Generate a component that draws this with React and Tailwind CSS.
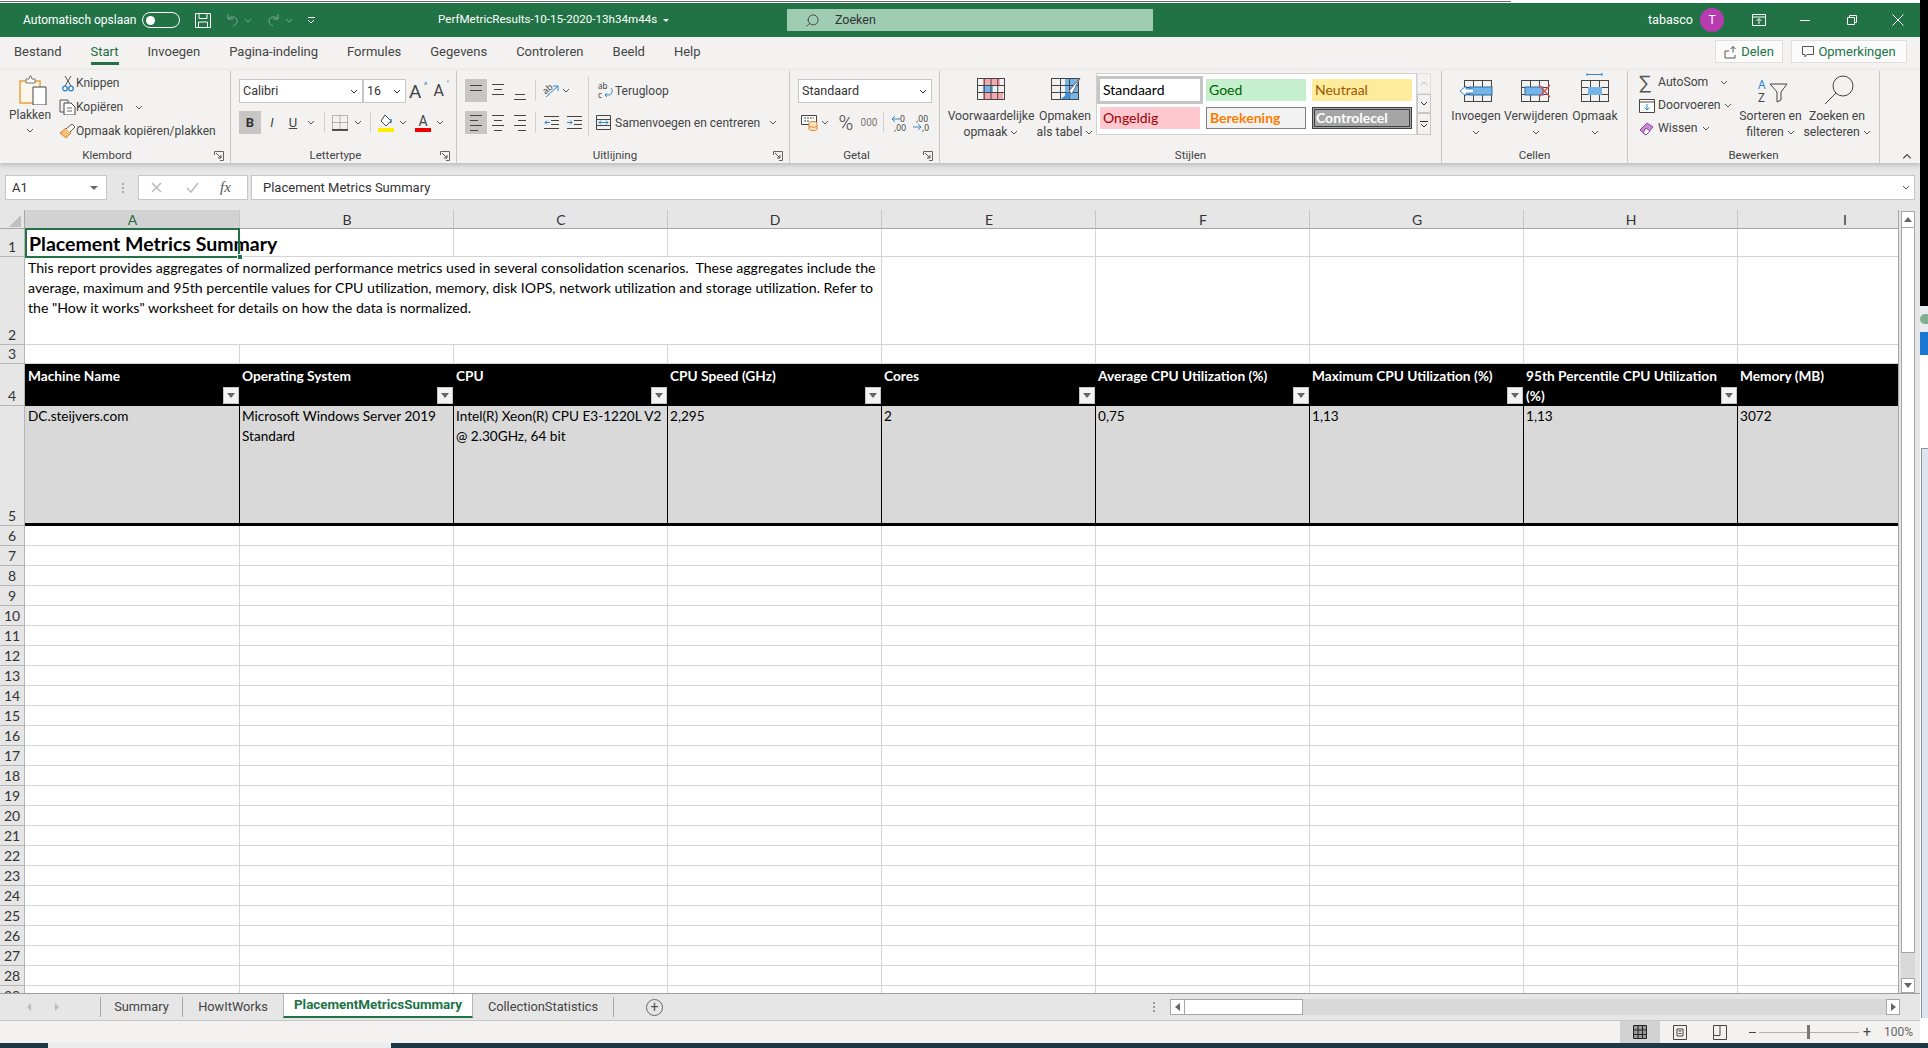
import { Search } from 'lucide-react'

const ui = "font-['Roboto',sans-serif]"
const cellFont = "font-['Lato',sans-serif]"

/* ── small icons ─────────────────────────────────────────────── */
function Chev({ className = 'text-[#555]' }) {
  return (
    <svg width="8" height="5" viewBox="0 0 8 5" className={className}>
      <path d="M1 1l3 3 3-3" fill="none" stroke="currentColor" strokeWidth="1" />
    </svg>
  )
}

function Launcher() {
  return (
    <svg width="10" height="10" viewBox="0 0 10 10" className="text-[#666]">
      <path d="M.5 4V.5H9.500V9.500H6" fill="none" stroke="currentColor" />
      <path d="M2 2l5 5M4 7h3V4" fill="none" stroke="#555" />
    </svg>
  )
}

function AlignIcon({ lines, y = 0 }) {
  return (
    <svg width="18" height="18" viewBox="0 0 18 18" className="text-[#444]">
      {lines.map((l, i) => (
        <path key={i} d={`M${l[0]} ${y + 2.5 + i * 5}H${l[1]}`} stroke="currentColor" />
      ))}
    </svg>
  )
}

function CellGrid({ w = 28, h = 22, cols = 3, rows = 3, x = 0, y = 0 }) {
  const v = []
  for (let i = 0; i <= cols; i++) v.push(x + 0.5 + (i * (w - 1)) / cols)
  const r = []
  for (let i = 0; i <= rows; i++) r.push(y + 0.5 + (i * (h - 1)) / rows)
  return (
    <g stroke="#444" fill="none">
      {v.map(p => <path key={`v${p}`} d={`M${p} ${y}V${y + h}`} />)}
      {r.map(p => <path key={`h${p}`} d={`M${x} ${p}H${x + w}`} />)}
    </g>
  )
}

function PasteIcon() {
  return (
    <svg width="28" height="30" viewBox="0 0 28 30">
      <path d="M1 6h20v22H1z" fill="#fdf6ea" stroke="#e8a33d" strokeWidth="1.500" />
      <path d="M7 6V4h3l1-3h1l1 3h3v4H7z" fill="#fff" stroke="#777" />
      <path d="M14 12h13v18H14z" fill="#fff" stroke="#444" />
    </svg>
  )
}

function ScissorsIcon() {
  return (
    <svg width="12" height="17" viewBox="0 0 12 17">
      <path d="M3 11L9 1M9 11L3 1" stroke="#555" fill="none" />
      <circle cx="3" cy="13.500" r="2.300" fill="none" stroke="#2e86c9" strokeWidth="1.300" />
      <circle cx="9" cy="13.500" r="2.300" fill="none" stroke="#2e86c9" strokeWidth="1.300" />
    </svg>
  )
}

function CopyIcon() {
  return (
    <svg width="17" height="16" viewBox="0 0 17 16">
      <path d="M5 13H1V1h8v3" fill="none" stroke="#555" />
      <path d="M5 4h7l4 4v8H5z" fill="#fff" stroke="#444" />
      <path d="M8 9h5M8 12h5" stroke="#666" />
    </svg>
  )
}

function PainterIcon() {
  return (
    <svg width="17" height="16" viewBox="0 0 17 16">
      <path d="M1 10l6-5 5 5-5 5z" fill="#f6c078" stroke="#d8842a" />
      <path d="M7 6l6-5 3 3-5 5" fill="#fff" stroke="#555" />
    </svg>
  )
}

function BordersIcon() {
  return (
    <svg width="16" height="16" viewBox="0 0 16 16">
      <path d="M.5 .5h15v14H.5z" fill="none" stroke="#777" strokeDasharray="1 1" />
      <path d="M8 .5v14M.5 7.500h15" stroke="#777" strokeDasharray="1 1" />
      <path d="M0 15h16" stroke="#222" strokeWidth="1.500" />
    </svg>
  )
}

function FillIcon() {
  return (
    <svg width="16" height="18" viewBox="0 0 16 18">
      <path d="M7 1l6 6-5 5-5-5z" fill="#fff" stroke="#444" />
      <path d="M13 5v4" stroke="#2e86c9" strokeWidth="1.500" />
      <rect y="14" width="16" height="4" fill="#ffee00" />
    </svg>
  )
}

function WrapIcon() {
  return (
    <svg width="15" height="18" viewBox="0 0 15 18" className="overflow-visible">
      <text x="0" y="7" fontSize="8" fill="#444" fontFamily="Noto Sans">ab</text>
      <text x="0" y="16" fontSize="8" fill="#444" fontFamily="Noto Sans">c</text>
      <path d="M13 6c3 4 0 7-3 7H7m2-2l-2 2 2 2" fill="none" stroke="#2e86c9" />
    </svg>
  )
}

function MergeIcon() {
  return (
    <svg width="15" height="15" viewBox="0 0 15 15">
      <path d="M.5 .5h14v14H.5zM.5 4.500h14M.5 10.500h14" fill="none" stroke="#444" />
      <path d="M3 7.500h9M5 5.500l-2 2 2 2M10 5.500l2 2-2 2" fill="none" stroke="#2e86c9" />
    </svg>
  )
}

function OrientIcon() {
  return (
    <svg width="17" height="15" viewBox="0 0 17 15" className="overflow-visible">
      <text x="0" y="9" fontSize="9" fill="#444" fontFamily="Noto Sans" transform="rotate(-40 5 7)">ab</text>
      <path d="M3 14L15 3m-5 0h5v5" fill="none" stroke="#2e86c9" />
    </svg>
  )
}

function IndentIcon({ flip }) {
  return (
    <svg width="15" height="13" viewBox="0 0 15 13">
      <path d="M0 .5h15M7 4.500h8M7 8.500h8M0 12.500h15" stroke="#444" />
      {flip ? (
        <path d="M0 6.500h5M3 4.500l2 2-2 2" fill="none" stroke="#2e86c9" />
      ) : (
        <path d="M6 6.500H1M3 4.500l-2 2 2 2" fill="none" stroke="#2e86c9" />
      )}
    </svg>
  )
}

function CurrencyIcon() {
  return (
    <svg width="17" height="17" viewBox="0 0 17 17">
      <path d="M.5 1.500h15v9H.5z" fill="#fff" stroke="#444" />
      <path d="M3 4h10M3 7h5" stroke="#444" strokeDasharray="2 1" />
      <ellipse cx="12" cy="9" rx="4" ry="1.500" fill="#fbe3c3" stroke="#d8842a" />
      <path d="M8 9v6c0 2 8 2 8 0V9" fill="#fbe3c3" stroke="#d8842a" />
      <path d="M8 12c0 1.500 8 1.500 8 0" fill="none" stroke="#d8842a" />
    </svg>
  )
}

function DecimalIcon({ more }) {
  return (
    <svg width="17" height="18" viewBox="0 0 17 18" className="overflow-visible">
      {more ? (
        <>
          <text x="3" y="8" fontSize="8.500" fill="#444" fontFamily="Noto Sans">,00</text>
          <text x="9" y="17" fontSize="8.500" fill="#444" fontFamily="Noto Sans">,0</text>
          <path d="M0 13h8M5 10l3 3-3 3" fill="none" stroke="#2e86c9" />
        </>
      ) : (
        <>
          <text x="9" y="8" fontSize="8.500" fill="#444" fontFamily="Noto Sans">0</text>
          <text x="3" y="17" fontSize="8.500" fill="#444" fontFamily="Noto Sans">,00</text>
          <path d="M9 5H1M4 2L1 5l3 3" fill="none" stroke="#2e86c9" />
        </>
      )}
    </svg>
  )
}

function CondIcon() {
  return (
    <svg width="29" height="30" viewBox="0 0 29 30">
      <rect x="6" y="8" width="17" height="7" fill="#f4a7ac" />
      <rect x="6" y="15" width="10" height="7" fill="#74b4e8" />
      <rect x="6" y="22" width="20" height="8" fill="#f4a7ac" />
      <CellGrid w={28} h={22} x={0} y={8} cols={4} rows={3} />
    </svg>
  )
}

function TableIcon() {
  return (
    <svg width="30" height="30" viewBox="0 0 30 30">
      <rect x="14" y="8" width="14" height="22" fill="#74b4e8" />
      <CellGrid w={28} h={22} x={0} y={8} cols={3} rows={3} />
      <path d="M29 8L18 21l3 3z" fill="#fff" stroke="#666" />
      <path d="M17 22c-3 1-2 5-7 6 5 3 10 0 10-4z" fill="#3f8fd2" />
    </svg>
  )
}

function InsertIcon() {
  return (
    <svg width="34" height="30" viewBox="0 0 34 30">
      <CellGrid w={28} h={22} x={5} y={8} cols={3} rows={3} />
      <rect x="10" y="15" width="23" height="8" fill="#74b4e8" stroke="#2a6aa8" />
      <path d="M14 17H7V14L1 19l6 5v-3h7" fill="#fff" stroke="#2e86c9" />
    </svg>
  )
}

function DeleteIcon() {
  return (
    <svg width="30" height="30" viewBox="0 0 30 30">
      <CellGrid w={28} h={22} x={0} y={8} cols={3} rows={3} />
      <rect x="4" y="15" width="18" height="8" fill="#74b4e8" stroke="#2a6aa8" />
      <path d="M18 13l11 12M29 13L18 25" stroke="#e5484d" strokeWidth="1.300" />
    </svg>
  )
}

function FormatIcon() {
  return (
    <svg width="30" height="30" viewBox="0 0 30 30">
      <path d="M7 2.500h15M7 1v3M22 1v3" stroke="#2e86c9" />
      <CellGrid w={28} h={22} x={1} y={8} cols={3} rows={3} />
      <rect x="8" y="15" width="14" height="8" fill="#74b4e8" />
    </svg>
  )
}

function SortIcon() {
  return (
    <svg width="32" height="27" viewBox="0 0 32 27">
      <text x="1" y="12" fontSize="12" fill="#2e86c9" fontFamily="Noto Sans">A</text>
      <text x="1" y="25" fontSize="12" fill="#444" fontFamily="Noto Sans">Z</text>
      <path d="M13 7h17l-6 8v8l-4 2V15z" fill="none" stroke="#444" />
    </svg>
  )
}

function FindIcon() {
  return (
    <svg width="32" height="30" viewBox="0 0 32 30">
      <circle cx="20" cy="11" r="10" fill="none" stroke="#444" />
      <path d="M13 18L2 29" stroke="#444" />
    </svg>
  )
}

function ViewIcon({ kind }) {
  if (kind === 'grid') {
    return (
      <svg width="14" height="14" viewBox="0 0 14 14">
        <path d="M.5 .5h13v13H.5zM.5 5h13M.5 9.500h13M5 .5v13M9.500 .5v13" fill="#999" stroke="#222" />
      </svg>
    )
  }
  if (kind === 'page') {
    return (
      <svg width="14" height="15" viewBox="0 0 14 15">
        <path d="M.5 .5h13v14H.5z" fill="none" stroke="#444" />
        <path d="M4 4h6v7H4zM5.500 6h3M5.500 8.500h3" fill="none" stroke="#444" />
      </svg>
    )
  }
  return (
    <svg width="14" height="15" viewBox="0 0 14 15">
      <path d="M.5 .5h13v14H.5zM.5 10.500H7V.5" fill="none" stroke="#444" />
    </svg>
  )
}

function FilterButton() {
  return (
    <div className="absolute right-[1px] bottom-[2px] w-[16px] h-[17px] bg-[#f3f3f3] border border-[#c4c4c4] flex items-center justify-center">
      <div className="w-0 h-0 border-x-[4px] border-x-transparent border-t-[5px] border-t-[#666]" />
    </div>
  )
}

/* ── ribbon parts ────────────────────────────────────────────── */
function Group({ width, label, launcher, children }) {
  return (
    <div className={`${width} flex flex-col flex-shrink-0 mt-px border-r border-[#c8c6c4]`}>
      <div className="h-[78px] flex">{children}</div>
      <div className="h-[10px] flex text-[11.500px] leading-[12px] text-[#444]">
        <div className="flex-1 text-center">{label}</div>
        {launcher && <div className="w-[16px] flex items-start pt-[2px]"><Launcher /></div>}
      </div>
    </div>
  )
}

function BigButton({ width, margin = '', icon, lines, chevOwnLine }) {
  return (
    <div className={`${width} ${margin} flex flex-col items-center flex-shrink-0 text-[12.200px] leading-[20px] text-[#444]`}>
      <div className="h-[35px] pt-px flex items-start justify-center">{icon}</div>
      <span className="whitespace-nowrap h-[16px] leading-[20px]">{lines[0]}</span>
      {chevOwnLine ? (
        <div className="h-[20px] flex items-center"><Chev /></div>
      ) : (
        <div className="h-[20px] flex items-center gap-[3px] whitespace-nowrap">{lines[1]} <Chev /></div>
      )}
    </div>
  )
}

function ComboBox({ width, text, font = '' }) {
  return (
    <div className={`${width} h-[24px] bg-white border border-[#c6c6c6] flex items-center justify-between pl-[3px] pr-[4px] text-[12.500px] text-[#333] ${font}`}>
      <span>{text}</span>
      <Chev className="text-[#333]" />
    </div>
  )
}

const VSep = () => <div className="w-px h-[21px] bg-[#d2d0ce] flex-shrink-0" />

const styleCells = [
  { text: 'Standaard', cls: 'pl-[3px] bg-white text-black outline outline-[3px] outline-[#c6c6c6]' },
  { text: 'Goed', cls: 'pl-[3px] bg-[#c6efce] text-[#006100]' },
  { text: 'Neutraal', cls: 'pl-[3px] bg-[#ffeb9c] text-[#9c5700]' },
  { text: 'Ongeldig', cls: 'pl-[3px] bg-[#ffc7ce] text-[#9c0006]' },
  { text: 'Berekening', cls: 'pl-[3px] bg-[#f2f2f2] text-[#fa7d00] border border-[#7f7f7f] font-bold' },
  { text: 'Controlecel', cls: 'pl-[1px] bg-[#a5a5a5] text-white border-[3px] border-double border-[#3f3f3f] font-bold' },
]

function Ribbon() {
  return (
    <div className="h-[93px] flex bg-[#f3f2f1] shadow-[0_2px_5px_rgba(0,0,0,0.2)] relative z-10">
      {/* Klembord */}
      <Group width="w-[231px]" label="Klembord" launcher>
        <div className="w-[60px] flex-shrink-0 flex flex-col items-center text-[12px] text-[#444]">
          <div className="h-[34px] pt-[4px] pl-[5px]"><PasteIcon /></div>
          <div className="h-[20px] leading-[20px]">Plakken</div>
          <div className="h-[10px] flex items-center"><Chev /></div>
        </div>
        <div className="flex flex-col text-[12px] text-[#444]">
          <div className="h-[24px] flex items-center"><div className="w-[16px] pl-[2px]"><ScissorsIcon /></div>Knippen</div>
          <div className="h-[24px] flex items-center"><div className="w-[16px] -ml-[1px] mr-[1px]"><CopyIcon /></div>Kopiëren<span className="ml-[12px]"><Chev /></span></div>
          <div className="h-[24px] flex items-center"><div className="w-[16px] -ml-[1px] mr-[1px]"><PainterIcon /></div><span className="whitespace-nowrap">Opmaak kopiëren/plakken</span></div>
        </div>
      </Group>

      {/* Lettertype */}
      <Group width="w-[226px]" label="Lettertype" launcher>
        <div className="pl-[8px] pt-[8px]">
          <div className="flex items-center">
            <ComboBox width="w-[124px]" text="Calibri" />
            <ComboBox width="w-[43px]" text="16" />
            <span className="ml-[3px] text-[19px] leading-none text-[#444] relative">A<span className="absolute -top-[1px] -right-[6px] text-[9px] text-[#2e86c9]">^</span></span>
            <span className="ml-[12px] text-[16px] leading-none text-[#444] relative">A<span className="absolute -top-[2px] -right-[6px] text-[9px] text-[#2e86c9]">ˇ</span></span>
          </div>
          <div className="flex items-center mt-[8px] h-[23px]">
            <div className="w-[22px] h-[23px] bg-[#c8c6c4] flex items-center justify-center text-[13px] font-bold text-[#333]">B</div>
            <div className="w-[22px] text-center text-[13px] italic text-[#444]">I</div>
            <div className="w-[20px] text-center text-[13px] underline text-[#444]">U</div>
            <div className="w-[16px] flex justify-center"><Chev /></div>
            <div className="w-[5px]" /><VSep /><div className="w-[7px]" />
            <BordersIcon />
            <div className="w-[18px] flex justify-end pr-[4px]"><Chev /></div>
            <div className="w-[4px]" /><VSep /><div className="w-[7px]" />
            <FillIcon />
            <div className="w-[17px] flex justify-center"><Chev /></div>
            <div className="w-[4px]" />
            <div className="w-[16px] flex flex-col items-center text-[14px] leading-[14px] text-[#444]">A<div className="w-[16px] h-[4px] bg-[#ee0000]" /></div>
            <div className="w-[18px] flex justify-center"><Chev /></div>
          </div>
        </div>
      </Group>

      {/* Uitlijning */}
      <Group width="w-[333px]" label="Uitlijning" launcher>
        <div className="w-[131px] flex-shrink-0 pl-[8px] pt-[8px]">
          <div className="flex items-center h-[23px]">
            <div className="w-[22px] h-[23px] bg-[#c8c6c4] flex items-center justify-center"><AlignIcon lines={[[3, 15], [3, 15]]} y={1} /></div>
            <div className="w-[22px] flex justify-center"><AlignIcon lines={[[3, 15], [5, 13], [3, 15]]} /></div>
            <div className="w-[22px] flex justify-center"><AlignIcon lines={[[0, 0], [4, 14], [3, 15]]} y={5} /></div>
            <div className="w-[4px]" /><VSep /><div className="w-[7px]" />
            <OrientIcon />
            <div className="w-[12px] flex justify-center"><Chev /></div>
          </div>
          <div className="flex items-center h-[23px] mt-[9px]">
            <div className="w-[22px] h-[23px] bg-[#c8c6c4] flex items-center justify-center"><AlignIcon lines={[[3, 15], [3, 11], [3, 15], [3, 11]]} y={-1} /></div>
            <div className="w-[22px] flex justify-center"><AlignIcon lines={[[3, 15], [5, 13], [3, 15], [5, 13]]} y={-1} /></div>
            <div className="w-[22px] flex justify-center"><AlignIcon lines={[[3, 15], [7, 15], [3, 15], [7, 15]]} y={-1} /></div>
            <div className="w-[4px]" /><VSep /><div className="w-[8px]" />
            <IndentIcon />
            <div className="w-[8px]" />
            <IndentIcon flip />
          </div>
        </div>
        <div className="w-px h-[59px] mt-[6px] bg-[#d2d0ce]" />
        <div className="pt-[8px] text-[12px] text-[#444]">
          <div className="flex items-center h-[23px] pl-[9px]">
            <WrapIcon /><span className="ml-[2px]">Terugloop</span>
          </div>
          <div className="flex items-center h-[23px] mt-[9px] pl-[7px] whitespace-nowrap">
            <MergeIcon /><span className="ml-[4px]">Samenvoegen en centreren</span><span className="ml-[9px]"><Chev /></span>
          </div>
        </div>
      </Group>

      {/* Getal */}
      <Group width="w-[150px]" label="Getal" launcher>
        <div className="pl-[8px] pt-[8px]">
          <ComboBox width="w-[134px]" text="Standaard" />
          <div className="flex items-center h-[23px] mt-[8px] pl-[3px]">
            <CurrencyIcon />
            <div className="w-[14px] flex justify-center"><Chev /></div>
            <div className="w-[6px]" />
            <span className="w-[16px] text-[20px] leading-none text-[#444] text-center font-light">%</span>
            <div className="w-[6px]" />
            <span className="w-[18px] text-[10px] text-[#777] text-center">000</span>
            <div className="w-[5px]" /><VSep /><div className="w-[7px]" />
            <DecimalIcon />
            <div className="w-[5px]" />
            <DecimalIcon more />
          </div>
        </div>
      </Group>

      {/* Stijlen */}
      <Group width="w-[502px]" label="Stijlen">
        <BigButton width="w-[82px]" margin="ml-[10px]" icon={<div className="pl-[1px] -mt-[2px]"><CondIcon /></div>} lines={['Voorwaardelijke', 'opmaak']} />
        <BigButton width="w-[60px]" margin="ml-[3px]" icon={<div className="pl-[1px] -mt-[2px]"><TableIcon /></div>} lines={['Opmaken', 'als tabel']} />
        <div className={`${cellFont} mt-[2px] w-[321px] h-[62px] ml-px bg-white border border-[#d2d0ce] grid grid-cols-[100px_100px_100px] content-start gap-x-[6px] gap-y-[6px] pl-[3px] pt-[5px] text-[14px]`}>
          {styleCells.map(c => (
            <div key={c.text} className={`h-[22px] flex items-center leading-none ${c.cls}`}>{c.text}</div>
          ))}
        </div>
        <div className="mt-[2px] w-[14px] h-[62px] flex flex-col">
          <div className="h-[21px] bg-[#f3f2f1] border border-[#e1dfdd] flex items-center justify-center text-[#bbb]"><Chev className="rotate-180 text-[#bbb]" /></div>
          <div className="h-[19px] bg-[#f3f2f1] border border-[#c8c6c4] flex items-center justify-center"><Chev className="text-[#333]" /></div>
          <div className="h-[22px] bg-[#f3f2f1] border border-[#c8c6c4] flex flex-col items-center justify-center gap-[1px]"><div className="w-[8px] h-px bg-[#333]" /><Chev className="text-[#333]" /></div>
        </div>
      </Group>

      {/* Cellen */}
      <Group width="w-[186px]" label="Cellen">
        <BigButton width="w-[52px]" margin="ml-[8px]" icon={<InsertIcon />} lines={['Invoegen']} chevOwnLine />
        <BigButton width="w-[62px]" margin="ml-[3px]" icon={<DeleteIcon />} lines={['Verwijderen']} chevOwnLine />
        <BigButton width="w-[50px]" margin="ml-[3px]" icon={<FormatIcon />} lines={['Opmaak']} chevOwnLine />
      </Group>

      {/* Bewerken */}
      <Group width="w-[252px]" label="Bewerken">
        <div className="w-[110px] flex-shrink-0 pl-[11px] text-[12.200px] text-[#444]">
          <div className="h-[23px] flex items-center">
            <span className="w-[19px] text-[20px] leading-none text-[#555]">∑</span>AutoSom<span className="ml-[12px]"><Chev /></span>
          </div>
          <div className="h-[23px] flex items-center whitespace-nowrap">
            <svg width="16" height="14" viewBox="0 0 16 14" className="mr-[3px]">
              <path d="M.5 .5h15v13H.5zM.5 3h15" fill="#fff" stroke="#444" />
              <path d="M8 5v6M5.500 8.500L8 11l2.500-2.500" fill="none" stroke="#2e86c9" />
            </svg>
            Doorvoeren<span className="ml-[3px]"><Chev /></span>
          </div>
          <div className="h-[23px] flex items-center">
            <svg width="16" height="14" viewBox="0 0 16 14" className="mr-[3px]">
              <path d="M1 8l7-7 6 4-7 8z" fill="#c98bd3" stroke="#8e44a6" />
              <path d="M4 11l3 2 4-4-4-3z" fill="#fff" stroke="#8e44a6" />
            </svg>
            Wissen<span className="ml-[4px]"><Chev /></span>
          </div>
        </div>
        <BigButton width="w-[65px]" icon={<div className="pl-[4px] mt-[5px]"><SortIcon /></div>} lines={['Sorteren en', 'filteren']} />
        <BigButton width="w-[68px]" icon={<div className="pl-[3px] mt-[3px]"><FindIcon /></div>} lines={['Zoeken en', 'selecteren']} />
      </Group>

      <div className="flex-1 flex items-end justify-end pb-[4px] pr-[9px]">
        <Chev className="rotate-180 text-[#444] scale-125" />
      </div>
    </div>
  )
}

/* ── sheet ───────────────────────────────────────────────────── */
const colWidths = ['w-[215px]', 'w-[214px]', 'w-[214px]', 'w-[214px]', 'w-[214px]', 'w-[214px]', 'w-[214px]', 'w-[214px]', 'w-[214px]']
const colNames = ['A', 'B', 'C', 'D', 'E', 'F', 'G', 'H', 'I']

const headerCells = [
  'Machine Name', 'Operating System', 'CPU', 'CPU Speed (GHz)', 'Cores',
  'Average CPU Utilization (%)', 'Maximum CPU Utilization (%)', '95th Percentile CPU Utilization (%)', 'Memory (MB)',
]
const dataCells = [
  'DC.steijvers.com', 'Microsoft Windows Server 2019 Standard', 'Intel(R) Xeon(R) CPU E3-1220L V2 @ 2.30GHz, 64 bit',
  '2,295', '2', '0,75', '1,13', '1,13', '3072',
]

function RowHead({ n, height }) {
  return (
    <div className={`${height} w-[25px] flex-shrink-0 bg-[#e6e6e6] border-r border-b border-[#b5b5b5] flex items-end justify-center text-[14px] leading-[19px] text-[#333]`}>
      {n}
    </div>
  )
}

function PlainRow({ n, height = 'h-[20px]' }) {
  return (
    <div className="flex">
      <RowHead n={n} height={height} />
      {colWidths.map((w, i) => (
        <div key={i} className={`${w} ${height} flex-shrink-0 border-r border-b border-[#d4d4d4]`} />
      ))}
    </div>
  )
}

function Sheet() {
  const plain = []
  for (let n = 7; n <= 28; n++) plain.push(n)

  return (
    <div className={`${cellFont} flex-1 flex flex-col min-w-0 overflow-hidden border-r border-[#a6a6a6]`}>
      {/* column headers */}
      <div className="flex h-[19px] flex-shrink-0">
        <div className="w-[25px] flex-shrink-0 bg-[#e6e6e6] border-b border-r border-[#a6a6a6] flex items-end justify-end pr-[3px] pb-px">
          <div className="w-0 h-0 border-l-[12px] border-l-transparent border-b-[12px] border-b-[#bfbfbf]" />
        </div>
        {colNames.map((c, i) => (
          <div key={c} className={`${colWidths[i]} flex-shrink-0 border-r border-b border-b-[#a6a6a6] border-r-[#c6c6c6] flex items-center justify-center pl-[1px] text-[14px] ${i === 0 ? 'bg-[#d2d2d2] text-[#1f6b43]' : 'bg-[#e6e6e6] text-[#333]'}`}>
            {c}
          </div>
        ))}
      </div>

      {/* row 1 */}
      <div className="flex relative">
        <RowHead n={1} height="h-[28px]" />
        {colWidths.map((w, i) => (
          <div key={i} className={`${w} h-[28px] flex-shrink-0 border-r border-b border-[#d4d4d4]`}>
            {i === 0 && <div className="pl-[4px] pt-[1px] text-[19.500px] leading-[28px] font-bold whitespace-nowrap text-black relative z-10">Placement Metrics Summary</div>}
          </div>
        ))}
        <div className="absolute left-[25px] -top-px w-[215px] h-[30px] border-2 border-[#217346] z-20" />
        <div className="absolute left-[237px] top-[25px] w-[6px] h-[6px] bg-[#217346] border border-white z-20" />
      </div>

      {/* row 2 */}
      <div className="flex">
        <RowHead n={2} height="h-[88px]" />
        <div className="w-[857px] h-[88px] flex-shrink-0 border-r border-b border-[#d4d4d4] pl-[3px] pt-px text-[14.150px] leading-[20px] text-black whitespace-pre-wrap">
          {'This report provides aggregates of normalized performance metrics used in several consolidation scenarios.  These aggregates include the average, maximum and 95th percentile values for CPU utilization, memory, disk IOPS, network utilization and storage utilization. Refer to the "How it works" worksheet for details on how the data is normalized.'}
        </div>
        {colWidths.slice(4).map((w, i) => (
          <div key={i} className={`${w} h-[88px] flex-shrink-0 border-r border-b border-[#d4d4d4]`} />
        ))}
      </div>

      <PlainRow n={3} height="h-[19px]" />

      {/* row 4 */}
      <div className="flex">
        <RowHead n={4} height="h-[42px]" />
        {headerCells.map((t, i) => (
          <div key={t} className={`${colWidths[i]} h-[42px] flex-shrink-0 bg-black text-white font-bold text-[13.700px] leading-[20px] ${i === 0 ? 'pl-[3px]' : 'pl-[2px]'} pr-[8px] pt-[2px] relative`}>
            {t}
            <FilterButton />
          </div>
        ))}
      </div>

      {/* row 5 */}
      <div className="flex">
        <RowHead n={5} height="h-[120px]" />
        {dataCells.map((t, i) => (
          <div key={i} className={`${colWidths[i]} h-[120px] flex-shrink-0 bg-[#d9d9d9] border-r border-b-[3px] border-r-black border-b-black text-[13.600px] leading-[20px] text-black ${i === 0 ? 'pl-[3px]' : 'pl-[2px]'}`}>
            {t}
          </div>
        ))}
      </div>

      <PlainRow n={6} />
      {plain.map(n => <PlainRow key={n} n={n} />)}
      <PlainRow n={29} />
    </div>
  )
}

function VScrollBar() {
  return (
    <div className="w-[21px] flex-shrink-0 bg-[#e6e6e6] pl-[2px] pr-[5px] pt-px flex flex-col">
      <div className="h-[17px] bg-white border border-[#a6a6a6] flex items-center justify-center">
        <div className="w-0 h-0 border-x-[4px] border-x-transparent border-b-[5px] border-b-[#666]" />
      </div>
      <div className="h-[725px] bg-white border-x border-b border-[#a6a6a6]" />
      <div className="flex-1 bg-[#d9d9d9]" />
      <div className="h-[15px] bg-white border border-[#a6a6a6] flex items-center justify-center">
        <div className="w-0 h-0 border-x-[4px] border-x-transparent border-t-[5px] border-t-[#666]" />
      </div>
    </div>
  )
}

/* ── tabs ────────────────────────────────────────────────────── */
function TabBar() {
  return (
    <div className="h-[28px] flex-shrink-0 flex bg-[#e6e6e6] border-t border-[#9e9e9e] border-b border-b-[#c6c6c6] text-[12.800px] text-[#444] items-center">
      <div className="w-[100px] flex items-center pl-[27px] gap-[24px] flex-shrink-0 h-full">
        <div className="w-0 h-0 border-y-[4px] border-y-transparent border-r-[4px] border-r-[#bbb]" />
        <div className="w-0 h-0 border-y-[4px] border-y-transparent border-l-[4px] border-l-[#bbb]" />
      </div>
      <div className="w-px h-[20px] bg-[#a6a6a6]" />
      <div className="w-[81px] text-center">Summary</div>
      <div className="w-px h-[20px] bg-[#a6a6a6]" />
      <div className="w-[100px] text-center">HowItWorks</div>
      <div className="w-[190px] h-[24px] self-start bg-white border-x border-b-2 border-x-[#b5b5b5] border-b-[#217346] flex items-center justify-center text-[13.400px] font-bold text-[#217346]">PlacementMetricsSummary</div>
      <div className="w-[140px] text-center whitespace-nowrap">CollectionStatistics</div>
      <div className="w-px h-[20px] bg-[#a6a6a6]" />
      <div className="w-[32px]" />
      <div className="w-[17px] h-[17px] rounded-full border border-[#666] flex items-center justify-center text-[14px] leading-none text-[#555]">+</div>
      <div className="w-[490px]" />
      <div className="flex flex-col gap-[2px] w-[17px]">
        <div className="w-[2px] h-[2px] bg-[#999]" /><div className="w-[2px] h-[2px] bg-[#999]" /><div className="w-[2px] h-[2px] bg-[#999]" />
      </div>
      {/* horizontal scrollbar */}
      <div className="w-[730px] h-[16px] flex">
        <div className="w-[15px] bg-white border border-[#a6a6a6] flex items-center justify-center">
          <div className="w-0 h-0 border-y-[4px] border-y-transparent border-r-[5px] border-r-[#666]" />
        </div>
        <div className="w-[118px] bg-white border-y border-r border-[#a6a6a6]" />
        <div className="flex-1 bg-[#d9d9d9]" />
        <div className="w-[14px] bg-white border border-[#a6a6a6] flex items-center justify-center">
          <div className="w-0 h-0 border-y-[4px] border-y-transparent border-l-[5px] border-l-[#666]" />
        </div>
      </div>
    </div>
  )
}

function StatusBar() {
  return (
    <div className="h-[22px] flex-shrink-0 bg-[#f3f2f1] flex items-stretch justify-end text-[12px] text-[#666] pr-[7px]">
      <div className="w-[40px] bg-[#d2d2d2] flex items-center justify-center"><ViewIcon kind="grid" /></div>
      <div className="w-[40px] flex items-center justify-center"><ViewIcon kind="page" /></div>
      <div className="w-[40px] flex items-center justify-center"><ViewIcon kind="break" /></div>
      <div className="w-[18px] flex items-center justify-end pr-[2px]"><div className="w-[7px] h-px bg-[#444]" /></div>
      <div className="w-[100px] ml-[1px] flex items-center">
        <div className="w-[48px] h-px bg-[#b0b0b0]" />
        <div className="w-[3px] h-[14px] bg-[#777]" />
        <div className="flex-1 h-px bg-[#b0b0b0]" />
      </div>
      <div className="w-[16px] flex items-center justify-center text-[#444] text-[14px]">+</div>
      <div className="w-[38px] flex items-center justify-end leading-none">100%</div>
    </div>
  )
}

/* ── main ────────────────────────────────────────────────────── */
export default function App() {
  const tabs = ['Bestand', 'Start', 'Invoegen', 'Pagina-indeling', 'Formules', 'Gegevens', 'Controleren', 'Beeld', 'Help']

  return (
    <div className={`${ui} w-[1928px] h-[1048px] overflow-hidden flex flex-col bg-white`}>
      <div className="flex flex-1 min-h-0">
        {/* Excel window */}
        <div className="w-[1920px] flex-shrink-0 flex flex-col">
          <div className="h-[3px] bg-white pt-px flex-shrink-0"><div className="w-[1511px] h-px bg-[#6b6b6b]" /></div>

          {/* title bar */}
          <div className="h-[34px] flex-shrink-0 bg-[#217346] text-white flex items-center text-[12.500px] relative">
            <span className="ml-[23px] w-[112px] whitespace-nowrap text-[12px]">Automatisch opslaan</span>
            <div className="ml-[7px] w-[38px] h-[16px] rounded-full border border-white flex items-center pl-[3px]">
              <div className="w-[9px] h-[9px] rounded-full bg-white" />
            </div>
            <svg width="16" height="15" viewBox="0 0 16 15" className="ml-[15px]">
              <path d="M.5 .5h15v14H.5zM4 .5v5h8v-5M3.500 14.500V9h9v5.500" fill="none" stroke="#fff" />
            </svg>
            <svg width="15" height="14" viewBox="0 0 15 14" className="ml-[14px] opacity-40">
              <path d="M3 1v5h5M3 6c3-4 10-2 9 3-.5 2-2 3-4 4" fill="none" stroke="#fff" />
            </svg>
            <span className="ml-[4px] opacity-40"><Chev className="text-white" /></span>
            <svg width="15" height="14" viewBox="0 0 15 14" className="ml-[14px] opacity-40">
              <path d="M12 1v5H7M12 6C9 2 2 4 3 9c.5 2 2 3 4 4" fill="none" stroke="#fff" />
            </svg>
            <span className="ml-[4px] opacity-40"><Chev className="text-white" /></span>
            <span className="ml-[14px] flex flex-col items-center gap-[1px]"><div className="w-[7px] h-px bg-white" /><Chev className="text-white" /></span>

            <span className="ml-[123px] w-[219px] whitespace-nowrap text-[11.600px]">PerfMetricResults-10-15-2020-13h34m44s</span>
            <div className="ml-[6px] w-0 h-0 border-x-[3px] border-x-transparent border-t-[3px] border-t-white" />

            <div className="ml-[118px] w-[366px] h-[22px] bg-[#9fcdb3] flex items-center text-[#333] pl-[18px]">
              <Search size={15} strokeWidth={1.3} className="-scale-x-100 text-[#333]" />
              <span className="ml-[15px]">Zoeken</span>
            </div>

            <span className="ml-[495px] w-[41px]">tabasco</span>
            <div className="ml-[11px] w-[24px] h-[24px] rounded-full bg-[#b83bb0] flex items-center justify-center text-[12px]">T</div>
            <svg width="14" height="12" viewBox="0 0 14 12" className="ml-[28px]">
              <path d="M.5 .5h13v11H.5zM.5 3h13M7 10V5M4.500 7L7 4.500 9.500 7" fill="none" stroke="#fff" />
            </svg>
            <div className="ml-[34px] w-[10px] h-px bg-white" />
            <svg width="10" height="10" viewBox="0 0 10 10" className="ml-[37px]">
              <path d="M.5 2.500h7v7h-7zM2.500 2.500v-2h7v7h-2" fill="none" stroke="#fff" />
            </svg>
            <svg width="12" height="12" viewBox="0 0 12 12" className="ml-[35px]">
              <path d="M.5 .5l11 11M11.500 .5l-11 11" stroke="#fff" />
            </svg>
          </div>

          {/* ribbon tabs */}
          <div className="h-[33px] flex-shrink-0 bg-[#f3f2f1] flex items-start pl-[14px] text-[13px] text-[#444]">
            {tabs.map(t => (
              <div key={t} className={`relative mr-[29px] h-[30px] leading-[30px] whitespace-nowrap ${t === 'Start' ? 'text-[#1f6b43]' : ''}`}>
                {t}
                {t === 'Start' && <div className="absolute left-0 right-0 top-[25px] h-[3px] bg-[#217346]" />}
              </div>
            ))}
            <div className="flex-1" />
            <div className="w-[68px] h-[23px] mt-[3px] pt-px bg-[#fbfbfb] border border-[#e1dfdd] flex items-center justify-center gap-[4px] text-[#217346]">
              <svg width="13" height="13" viewBox="0 0 13 13">
                <path d="M9 .5v6M6.500 3l2.500-2.500L11.500 3M5 5H1v7h10V9" fill="none" stroke="#555" />
              </svg>
              Delen
            </div>
            <div className="ml-[8px] mr-[13px] mt-[3px] pt-px w-[116px] h-[23px] bg-[#fbfbfb] border border-[#e1dfdd] flex items-center justify-center gap-[4px] text-[#217346]">
              <svg width="12" height="12" viewBox="0 0 12 12">
                <path d="M.5 .5h11v8H5L3 11V8.500H.5z" fill="none" stroke="#555" />
              </svg>
              Opmerkingen
            </div>
          </div>

          <Ribbon />

          {/* formula bar */}
          <div className="h-[47px] flex-shrink-0 bg-[#e6e6e6] flex items-start pt-[12px] text-[13px] text-[#333]">
            <div className="ml-[5px] w-[102px] h-[25px] bg-white border border-[#c6c6c6] flex items-center justify-between pl-[6px] pr-[8px]">
              A1
              <div className="w-0 h-0 border-x-[4px] border-x-transparent border-t-[4px] border-t-[#666]" />
            </div>
            <div className="ml-[14px] w-[3px] h-[25px] flex flex-col items-center justify-center gap-[2px]">
              <div className="w-[2px] h-[2px] bg-[#aaa]" /><div className="w-[2px] h-[2px] bg-[#aaa]" /><div className="w-[2px] h-[2px] bg-[#aaa]" />
            </div>
            <div className="ml-[14px] w-[110px] h-[25px] bg-white border border-[#c6c6c6] flex items-center text-[#bbb]">
              <svg width="11" height="11" viewBox="0 0 11 11" className="ml-[12px]">
                <path d="M1 1l9 9M10 1l-9 9" stroke="#bbb" strokeWidth="1.500" />
              </svg>
              <svg width="13" height="11" viewBox="0 0 13 11" className="ml-[24px]">
                <path d="M1 6l4 4 7-9" fill="none" stroke="#bbb" strokeWidth="1.500" />
              </svg>
              <span className="ml-[21px] italic font-['Liberation_Serif',serif] text-[15px] text-[#555]">fx</span>
            </div>
            <div className="ml-[3px] w-[1664px] h-[25px] bg-white border border-[#c6c6c6] flex items-center justify-between pl-[11px] pr-[4px]">
              Placement Metrics Summary
              <Chev />
            </div>
          </div>

          {/* sheet */}
          <div className="flex-1 flex min-h-0 overflow-hidden">
            <Sheet />
            <VScrollBar />
          </div>

          <TabBar />
          <StatusBar />
        </div>

        {/* window behind on the right */}
        <div className="flex-1 flex flex-col">
          <div className="h-[306px] bg-black" />
          <div className="h-[26px] bg-[#e8ebef] flex items-center">
            <div className="w-[8px] h-[10px] rounded-l-full bg-[#7fb08f]" />
          </div>
          <div className="h-[23px] bg-[#1976d2]" />
          <div className="h-[93px] bg-white" />
          <div className="flex-1 bg-[#dfe5ee] border-t border-l border-[#8a94a3] ml-px" />
          <div className="h-[25px] bg-white" />
        </div>
      </div>

      {/* taskbar peeking out */}
      <div className="h-[5px] flex-shrink-0 bg-[#1c3a45] flex pl-[48px]">
        <div className="w-[343px] bg-[#ececec]" />
      </div>
    </div>
  )
}
